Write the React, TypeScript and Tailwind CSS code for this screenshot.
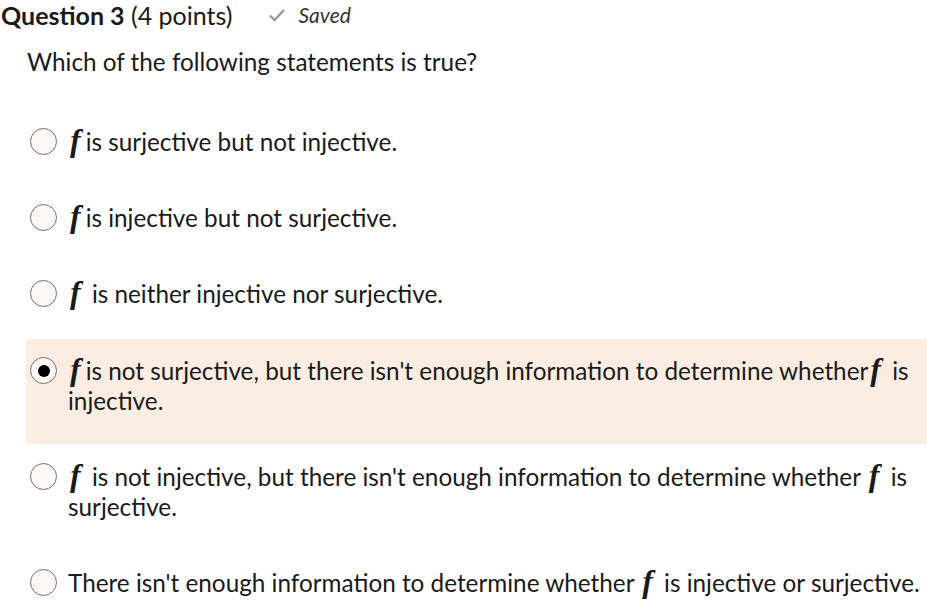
import React from "react";

const F = () => (
  <span className="pl-[2px] pr-[5px] font-['Liberation_Serif',serif] text-[32px] leading-[0] font-bold italic">f</span>
);

type Opt = { key: number; content: React.ReactNode; selected?: boolean; nowrap?: boolean };

function Radio(props: { selected?: boolean }) {
  return (
    <span className="mt-[1px] flex h-[27px] w-[27px] shrink-0 items-center justify-center rounded-full border border-[#6f6f6f] bg-[#fdf8f5]">
      {props.selected && <span className="h-[12px] w-[12px] rounded-full bg-black" />}
    </span>
  );
}

export default function App() {
  const options: Opt[] = [
    { key: 1, content: <><F />is surjective but not injective.</> },
    { key: 2, content: <><F />is injective but not surjective.</> },
    { key: 3, content: <><F /> is neither injective nor surjective.</> },
    {
      key: 4,
      selected: true,
      content: <><F />is not surjective, but there isn't enough information to determine whether<F /> is injective.</>,
    },
    {
      key: 5,
      content: <><F /> is not injective, but there isn't enough information to determine whether <F /> is surjective.</>,
    },
    {
      key: 6,
      nowrap: true,
      content: <>There isn't enough information to determine whether <F /> is injective or surjective.</>,
    },
  ];

  return (
    <main className="h-[604px] w-[927px] overflow-hidden bg-white font-['Lato',sans-serif] text-[#1a1a1a]">
      <header className="flex items-center pl-[1px] text-[25px] leading-[30px]">
        <h1>
          <span className="font-bold">Question 3</span> <span>(4 points)</span>
        </h1>
        <span className="ml-[36px] flex items-center gap-[12px] text-[21px] italic text-[#333]">
          <svg width="18" height="14" viewBox="0 0 18 14" className="text-[#999]">
            <path d="M2 7.5 L6.5 12 L16 2" fill="none" stroke="currentColor" strokeWidth="2.4" />
          </svg>
          Saved
        </span>
      </header>

      <p className="mt-[17px] pl-[27px] text-[24.3px] leading-[30px]">Which of the following statements is true?</p>

      <div className="mt-[50px] flex flex-col gap-[46px] pl-[26px]">
        {options.slice(0, 3).map((o) => (
          <Row key={o.key} o={o} />
        ))}
      </div>
      <div className="mt-[30px] ml-[26px] bg-[#fcede2] pt-[17px] pb-[28px]">
        <Row o={options[3]} />
      </div>
      <div className="mt-[18px] flex flex-col gap-[46px] pl-[26px]">
        {options.slice(4).map((o) => (
          <Row key={o.key} o={o} />
        ))}
      </div>
    </main>
  );
}

function Row(props: { o: Opt }) {
  const { o } = props;
  return (
    <div className="flex gap-[11px] pl-[4px]">
      <Radio selected={o.selected} />
      <div className={"pr-[8px] text-[24.3px] leading-[30px] " + (o.nowrap ? "whitespace-nowrap" : "")}>
        {o.content}
      </div>
    </div>
  );
}
